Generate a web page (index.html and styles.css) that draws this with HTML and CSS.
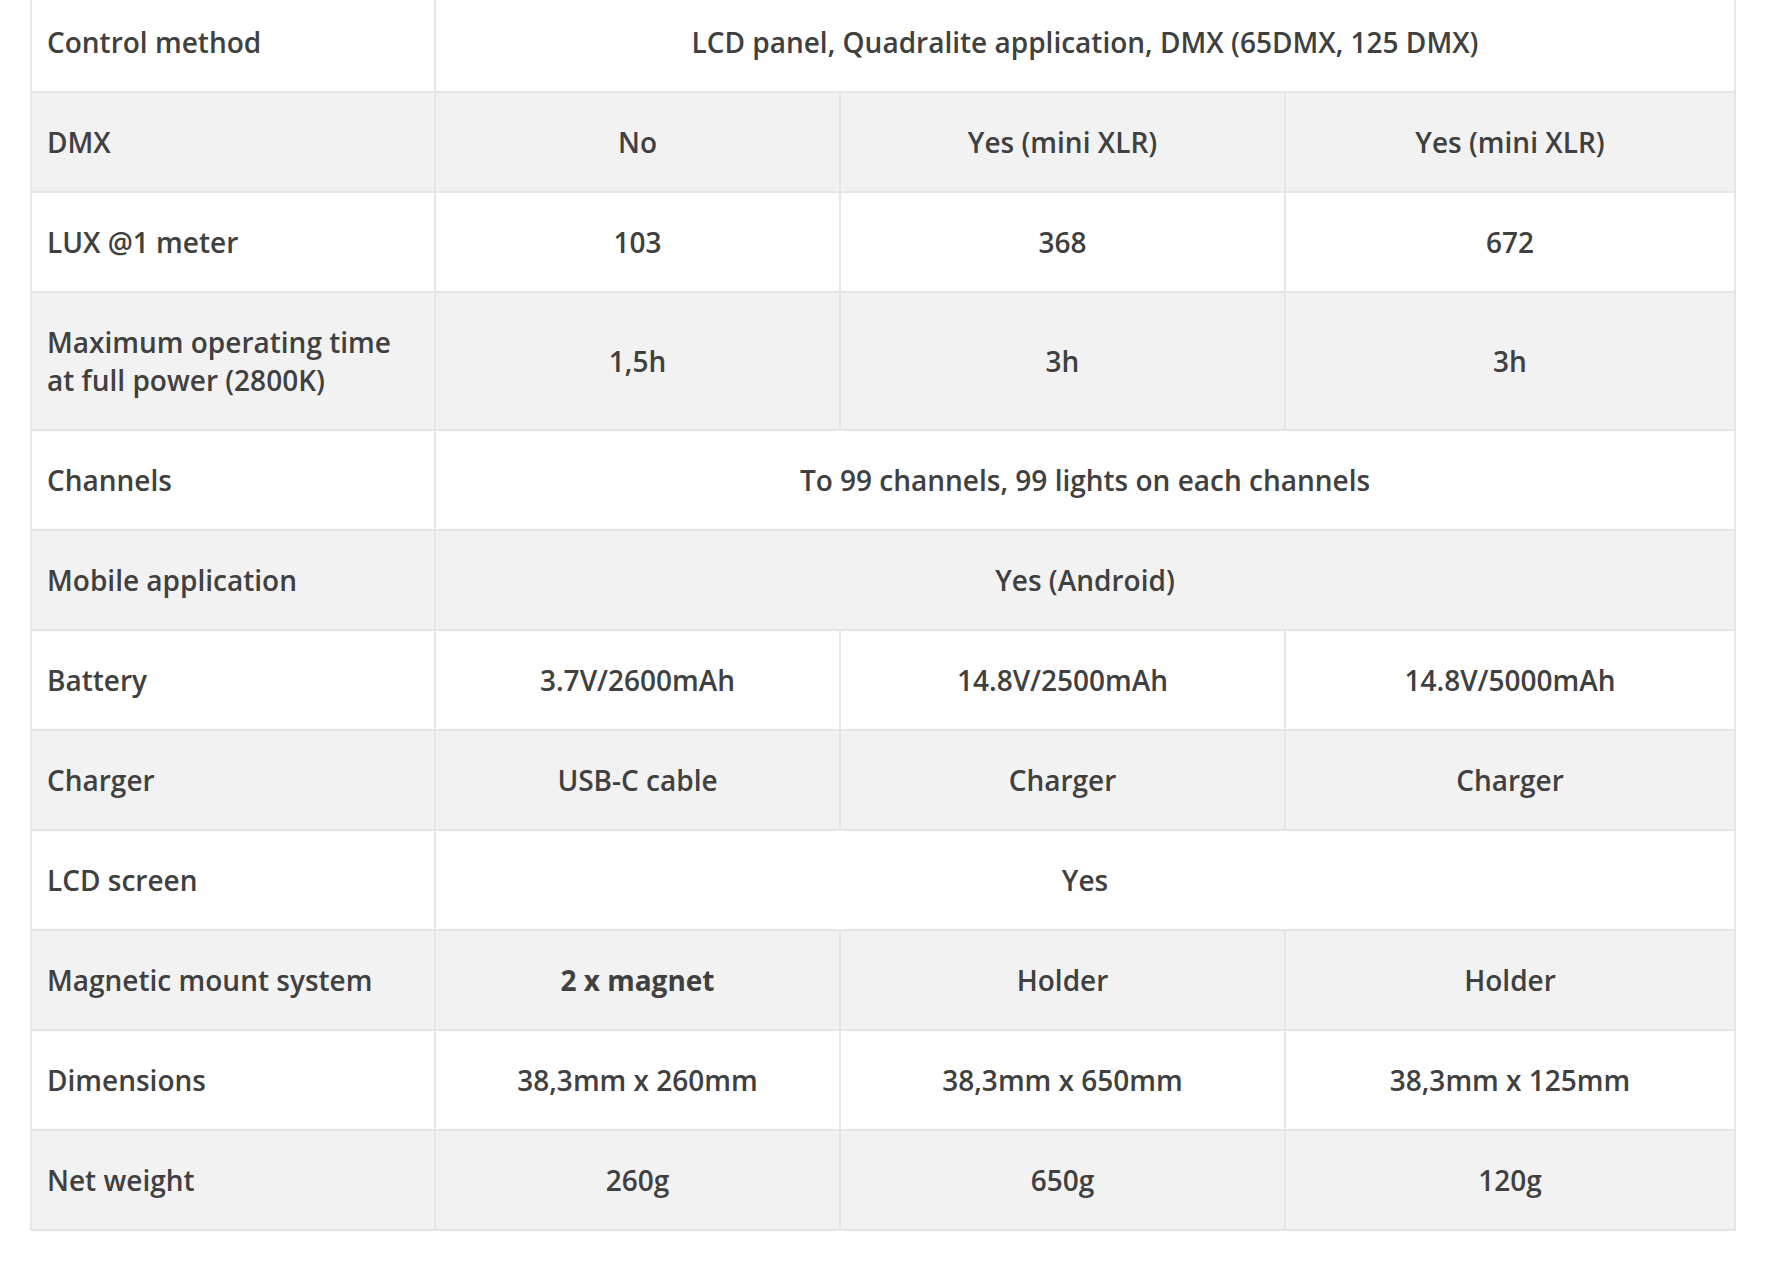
FILE: index.html
```html
<!DOCTYPE html>
<html lang="en">
<head>
<meta charset="utf-8">
<title>Specifications</title>
<link rel="stylesheet" href="styles.css">
</head>
<body>
<div class="specs">
  <div class="row">
    <div class="cell label">Control method</div>
    <div class="cell span3">LCD panel, Quadralite application, DMX (65DMX, 125 DMX)</div>
  </div>
  <div class="row alt">
    <div class="cell label">DMX</div>
    <div class="cell">No</div>
    <div class="cell">Yes (mini XLR)</div>
    <div class="cell">Yes (mini XLR)</div>
  </div>
  <div class="row">
    <div class="cell label">LUX @1 meter</div>
    <div class="cell">103</div>
    <div class="cell">368</div>
    <div class="cell">672</div>
  </div>
  <div class="row alt">
    <div class="cell label">Maximum operating time at full power (2800K)</div>
    <div class="cell">1,5h</div>
    <div class="cell">3h</div>
    <div class="cell">3h</div>
  </div>
  <div class="row">
    <div class="cell label">Channels</div>
    <div class="cell span3">To 99 channels, 99 lights on each channels</div>
  </div>
  <div class="row alt">
    <div class="cell label">Mobile application</div>
    <div class="cell span3">Yes (Android)</div>
  </div>
  <div class="row">
    <div class="cell label">Battery</div>
    <div class="cell">3.7V/2600mAh</div>
    <div class="cell">14.8V/2500mAh</div>
    <div class="cell">14.8V/5000mAh</div>
  </div>
  <div class="row alt">
    <div class="cell label">Charger</div>
    <div class="cell">USB-C cable</div>
    <div class="cell">Charger</div>
    <div class="cell">Charger</div>
  </div>
  <div class="row">
    <div class="cell label">LCD screen</div>
    <div class="cell span3">Yes</div>
  </div>
  <div class="row alt">
    <div class="cell label">Magnetic mount system</div>
    <div class="cell"><strong class="strong">2 x magnet</strong></div>
    <div class="cell">Holder</div>
    <div class="cell">Holder</div>
  </div>
  <div class="row">
    <div class="cell label">Dimensions</div>
    <div class="cell">38,3mm x 260mm</div>
    <div class="cell">38,3mm x 650mm</div>
    <div class="cell">38,3mm x 125mm</div>
  </div>
  <div class="row alt">
    <div class="cell label">Net weight</div>
    <div class="cell">260g</div>
    <div class="cell">650g</div>
    <div class="cell">120g</div>
  </div>
</div>
</body>
</html>
```

FILE: styles.css
```css
html, body {
  margin: 0;
  padding: 0;
  background: #ffffff;
}

body {
  font-family: "Open Sans", "Noto Sans", sans-serif;
  font-weight: 600;
  font-size: 28px;
  line-height: 38px;
  color: #404040;
}

.specs {
  display: grid;
  grid-template-columns: 404px 405px 445px 450px;
  width: 1706px;
  margin: -9px 0 0 30px;
  border-left: 2px solid #e6e6e6;
  border-top: 2px solid #e6e6e6;
}

.row {
  display: contents;
}

.cell {
  display: flex;
  align-items: center;
  justify-content: center;
  text-align: center;
  padding: 30px 15px;
  background: #ffffff;
  border-right: 2px solid #e6e6e6;
  border-bottom: 2px solid #e6e6e6;
}

.row.alt > .cell {
  background: #f2f2f2;
}

.cell.label {
  justify-content: flex-start;
  text-align: left;
}

.cell.span3 {
  grid-column: span 3;
}

.strong {
  font-weight: 700;
}
```
